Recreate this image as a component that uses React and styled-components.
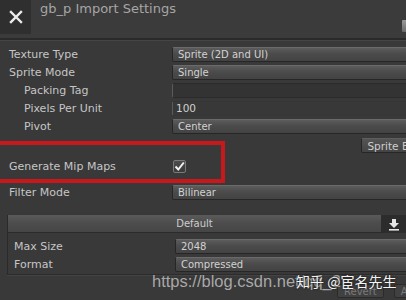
import React from 'react';
import styled, { createGlobalStyle } from 'styled-components';

const Global = createGlobalStyle`
  html, body { margin: 0; padding: 0; background: #393939; }
  body { width: 406px; height: 300px; overflow: hidden; font-family: "DejaVu Sans", Verdana, sans-serif; }
  #root { width: 406px; height: 300px; }
`;

const Window = styled.div`
  position: relative;
  width: 406px;
  height: 300px;
  overflow: hidden;
  background: #393939;
  display: flex;
  flex-direction: column;
`;

const Header = styled.div`
  height: 38px;
  flex: none;
  display: flex;
  align-items: flex-start;
  background: #3b3b3b;
  border-bottom: 2px solid #2a2a2a;
  box-shadow: 0 1px 0 #454545;
`;

const CloseBox = styled.div`
  width: 31px;
  height: 34px;
  background: #2f2f2f;
  display: flex;
  align-items: center;
  justify-content: center;
`;

const Title = styled.div`
  margin-left: 9px;
  margin-top: 1px;
  font-size: 13px;
  color: #a6a6a6;
  flex: 1;
`;

const CornerTab = styled.div`
  width: 4px;
  height: 12px;
  margin-top: 20px;
  background: linear-gradient(#9a9a9a, #6a6a6a);
  border-radius: 1px 0 0 1px;
`;

const Form = styled.div`
  display: flex;
  flex-direction: column;
  padding-top: 5px;
`;

const Row = styled.div`
  height: ${(p) => p.h || 18}px;
  display: flex;
  align-items: ${(p) => (p.top ? 'flex-start' : 'center')};
  margin-top: ${(p) => p.mt || 0}px;
`;

const Label = styled.div`
  width: ${(p) => (p.w || 172) - (p.indent ? 24 : 9)}px;
  padding-left: ${(p) => (p.indent ? 24 : 9)}px;
  flex: none;
  font-size: 11px;
  color: #c6c6c6;
  white-space: nowrap;
`;

const Dropdown = styled.div`
  flex: 1;
  height: 13px;
  margin-right: -4px;
  padding-left: 5px;
  display: flex;
  align-items: center;
  font-size: 10px;
  color: #d2d2d2;
  background: linear-gradient(#5c5c5c, #4b4b4b 45%, #434343);
  border: 1px solid #262626;
  border-top-color: #6a6a6a;
  border-radius: 2px;
  white-space: nowrap;
`;

const TextField = styled.div`
  flex: 1;
  height: 13px;
  margin-right: -4px;
  padding-left: 3px;
  display: flex;
  align-items: center;
  font-size: 10.5px;
  color: #d0d0d0;
  background: ${(p) => (p.dark ? '#333' : '#383838')};
  border: 1px solid ${(p) => (p.dark ? '#2a2a2a' : '#363636')};
  border-left-color: #5a5a5a;
  border-radius: 2px;
`;

const Spacer = styled.div`
  flex: 1;
`;

const SmallButton = styled.div`
  height: 13px;
  margin-top: 3px;
  margin-right: -34px;
  padding: 0 6px 0 5px;
  display: flex;
  align-items: center;
  font-size: 10.5px;
  color: #cfcfcf;
  background: linear-gradient(#545454, #444);
  border: 1px solid #262626;
  border-top-color: #5e5e5e;
  border-radius: 2px;
  white-space: nowrap;
`;

const Check = styled.div`
  width: 11px;
  height: 11px;
  margin-left: 1px;
  background: linear-gradient(#4c4c4c, #3a3a3a);
  border: 1px solid #7a7a7a;
  border-radius: 2px;
  display: flex;
  align-items: center;
  justify-content: center;
`;

const Panel = styled.div`
  margin: 14px 0 0 7px;
  border-left: 1px solid #2a2a2a;
  border-bottom: 1px solid #2c2c2c;
  box-shadow: 0 1px 0 #444;
  display: flex;
  flex-direction: column;
`;

const PanelHeader = styled.div`
  height: 18px;
  display: flex;
`;

const PanelTitle = styled.div`
  flex: 1;
  display: flex;
  align-items: center;
  justify-content: center;
  font-size: 10px;
  color: #cdcdcd;
  background: linear-gradient(#5a5a5a, #4c4c4c 50%, #464646);
  border-bottom: 1px solid #2b2b2b;
`;

const IconBox = styled.div`
  width: 25px;
  background: #2c2c2c;
  display: flex;
  align-items: center;
  justify-content: center;
`;

const PanelBody = styled.div`
  padding: 4px 0 1px;
  display: flex;
  flex-direction: column;
`;

const PanelLabel = styled(Label)`
  width: 161px;
  padding-left: 6px;
`;

const Footer = styled.div`
  display: flex;
  justify-content: flex-end;
  gap: 10px;
  padding-top: 9px;
  margin-right: -30px;
`;

const FooterButton = styled.div`
  height: 12px;
  padding: 0 6px;
  display: flex;
  align-items: center;
  font-size: 10px;
  color: #7a7a7a;
  background: #414141;
  border: 1px solid #2b2b2b;
  border-radius: 2px;
`;

const Annotation = styled.div`
  position: absolute;
  left: -10px;
  top: 141px;
  width: 227px;
  height: 34px;
  border: 4px solid #c8181c;
  pointer-events: none;
`;

const Watermark = styled.div`
  position: absolute;
  left: 152px;
  top: 272px;
  font-family: "Liberation Sans", Arial, sans-serif;
  font-size: 16.5px;
  color: rgba(190, 190, 190, 0.85);
  white-space: nowrap;
`;

const Zhihu = styled.div`
  position: absolute;
  left: 296px;
  top: 271px;
  font-family: "Noto Sans CJK SC", "Noto Sans", sans-serif;
  font-size: 14px;
  color: #f4f4f4;
  text-shadow: 0 0 2px #222, 0 0 2px #222;
  white-space: nowrap;
`;

const CloseIcon = () => (
  <svg width="14" height="14" viewBox="0 0 14 14">
    <path d="M2 2 L12 12 M12 2 L2 12" stroke="#ececec" strokeWidth="2.4" strokeLinecap="square" />
  </svg>
);

const CheckIcon = () => (
  <svg width="11" height="11" viewBox="0 0 11 11">
    <path d="M1.5 5.5 L4.3 8.5 L9.8 1.5" stroke="#f2f2f2" strokeWidth="2" fill="none" />
  </svg>
);

const DownloadIcon = () => (
  <svg width="12" height="13" viewBox="0 0 12 13">
    <path d="M4 1 H8 V5 H11 L6 10 L1 5 H4 Z" fill="#e6e6e6" />
    <rect x="1" y="11" width="10" height="1.6" fill="#e6e6e6" />
  </svg>
);

export default function App() {
  return (
    <Window>
      <Global />
      <Header>
        <CloseBox>
          <CloseIcon />
        </CloseBox>
        <Title>gb_p Import Settings</Title>
        <CornerTab />
      </Header>
      <Form>
        <Row>
          <Label>Texture Type</Label>
          <Dropdown>Sprite (2D and UI)</Dropdown>
        </Row>
        <Row>
          <Label>Sprite Mode</Label>
          <Dropdown>Single</Dropdown>
        </Row>
        <Row>
          <Label indent>Packing Tag</Label>
          <TextField dark />
        </Row>
        <Row>
          <Label indent>Pixels Per Unit</Label>
          <TextField>100</TextField>
        </Row>
        <Row>
          <Label indent>Pivot</Label>
          <Dropdown>Center</Dropdown>
        </Row>
        <Row h={22} top>
          <Spacer />
          <SmallButton>Sprite Editor</SmallButton>
        </Row>
        <Row>
          <Label>Generate Mip Maps</Label>
          <Check>
            <CheckIcon />
          </Check>
        </Row>
        <Row mt={8}>
          <Label>Filter Mode</Label>
          <Dropdown>Bilinear</Dropdown>
        </Row>
      </Form>
      <Panel>
        <PanelHeader>
          <PanelTitle>Default</PanelTitle>
          <IconBox>
            <DownloadIcon />
          </IconBox>
        </PanelHeader>
        <PanelBody>
          <Row>
            <PanelLabel>Max Size</PanelLabel>
            <Dropdown>2048</Dropdown>
          </Row>
          <Row>
            <PanelLabel>Format</PanelLabel>
            <Dropdown>Compressed</Dropdown>
          </Row>
        </PanelBody>
      </Panel>
      <Footer>
        <FooterButton>Revert</FooterButton>
        <FooterButton>Apply</FooterButton>
      </Footer>
      <Annotation />
      <Watermark>https://blog.csdn.net/qq_2</Watermark>
      <Zhihu>知乎 @宦名先生</Zhihu>
    </Window>
  );
}
